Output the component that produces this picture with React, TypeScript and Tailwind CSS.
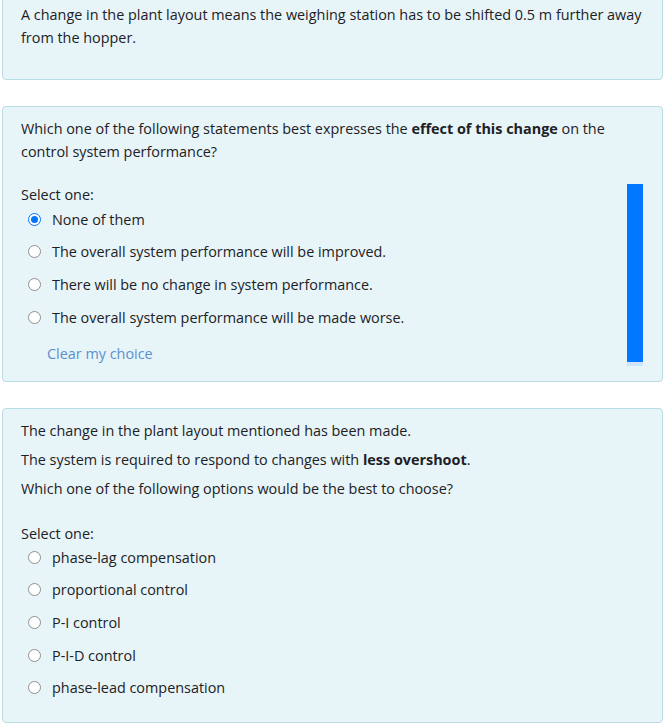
import React from 'react';

const font = { fontFamily: '"Open Sans", "Liberation Sans", sans-serif' };

function Radio({ checked, label }: { checked?: boolean; label: string }) {
  return (
    <label className="flex h-[32.6px] items-center pl-[7px]">
      <span
        className={
          checked
            ? 'flex h-[13px] w-[13px] items-center justify-center rounded-full border-[1.5px] border-[#0075ff] bg-white'
            : 'h-[13px] w-[13px] rounded-full border border-[#8f8f8f] bg-white'
        }
      >
        {checked && <span className="h-[7px] w-[7px] rounded-full bg-[#0075ff]" />}
      </span>
      <span className="ml-[11px]">{label}</span>
    </label>
  );
}

export default function App() {
  return (
    <div className="bg-white pl-[2px] text-[14.4px] leading-[23px] text-[#1d2125]" style={font}>
      <div className="-mt-[10px] h-[90px] rounded-[4px] border border-[#b8dde4] bg-[#e7f5f8] px-[18px] pt-[12px]">
        <p>A change in the plant layout means the weighing station has to be shifted 0.5 m further away</p>
        <p>from the hopper.</p>
      </div>

      <div className="relative mt-[26px] h-[276px] rounded-[4px] border border-[#b8dde4] bg-[#e7f5f8] px-[18px] pt-[10px]">
        <p>
          Which one of the following statements best expresses the <strong className="font-bold">effect of this change</strong> on the
        </p>
        <p>control system performance?</p>
        <p className="mt-[20px]">Select one:</p>
        <div className="-mt-[3px]">
          <Radio checked label="None of them" />
          <Radio label="The overall system performance will be improved." />
          <Radio label="There will be no change in system performance." />
          <Radio label="The overall system performance will be made worse." />
        </div>
        <p className="mt-[9px] pl-[26px] text-[#5b8fcf]">Clear my choice</p>
        <div className="absolute left-[624px] top-[77px] flex h-[182px] w-[16px] flex-col">
          <div className="flex-1 bg-[#0078ff]" />
          <div className="h-[4px] bg-[#cfe4f8]" />
        </div>
      </div>

      <div className="mt-[26px] h-[315px] rounded-[4px] border border-[#b8dde4] bg-[#e7f5f8] px-[18px] pt-[10px]">
        <p>The change in the plant layout mentioned has been made.</p>
        <p className="mt-[6px]">
          The system is required to respond to changes with <strong className="font-bold">less overshoot</strong>.
        </p>
        <p className="mt-[6px]">Which one of the following options would be the best to choose?</p>
        <p className="mt-[22px]">Select one:</p>
        <div className="-mt-[4px]">
          <Radio label="phase-lag compensation" />
          <Radio label="proportional control" />
          <Radio label="P-I control" />
          <Radio label="P-I-D control" />
          <Radio label="phase-lead compensation" />
        </div>
      </div>
    </div>
  );
}
